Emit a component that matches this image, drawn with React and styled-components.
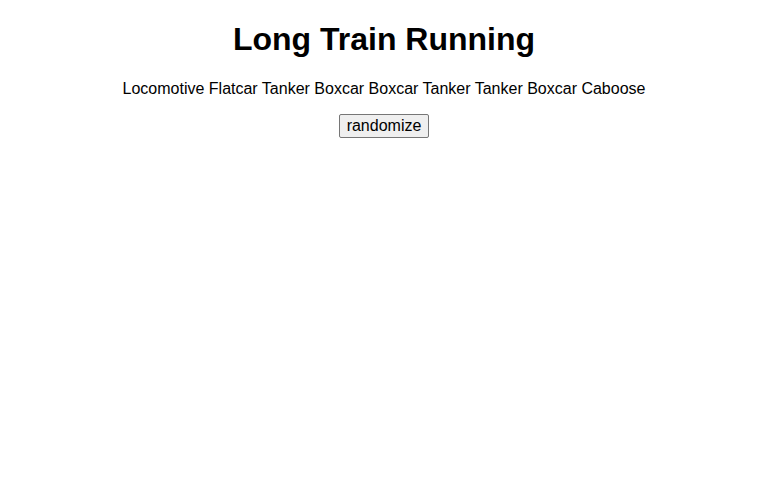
import React, { useState } from "react";
import styled, { createGlobalStyle } from "styled-components";

const GlobalStyle = createGlobalStyle`
  body {
    margin: 0;
    font-family: "Liberation Sans", Arial, sans-serif;
    background: #fff;
    color: #000;
  }
`;

const Wrapper = styled.div`
  text-align: center;
`;

const Title = styled.h1`
  font-size: 32px;
  font-weight: bold;
  margin: 21.44px 0;
`;

const Cars = styled.p`
  font-size: 16px;
  margin: 16px 0;
`;

const Button = styled.button`
  font-family: "Liberation Sans", Arial, sans-serif;
  font-size: 16px;
  color: #000;
  background: #efefef;
  border: 1px solid #767676;
  border-radius: 2px;
  padding: 2px 7px;
  cursor: pointer;
  &:hover {
    background: #e5e5e5;
  }
`;

// car types the train can be built from
const carTypes = ["Flatcar", "Tanker", "Boxcar"];

const initial = ["Flatcar", "Tanker", "Boxcar", "Boxcar", "Tanker", "Tanker", "Boxcar"];

export default function App() {
  const [cars, setCars] = useState(initial);

  const randomize = () => {
    const count = 3 + Math.floor(Math.random() * 6);
    const next = [];
    for (let i = 0; i < count; i++) {
      next.push(carTypes[Math.floor(Math.random() * carTypes.length)]);
    }
    setCars(next);
  };

  return (
    <Wrapper>
      <GlobalStyle />
      <Title>Long Train Running</Title>
      <Cars>{["Locomotive", ...cars, "Caboose"].join(" ")}</Cars>
      <Button onClick={randomize}>randomize</Button>
    </Wrapper>
  );
}
